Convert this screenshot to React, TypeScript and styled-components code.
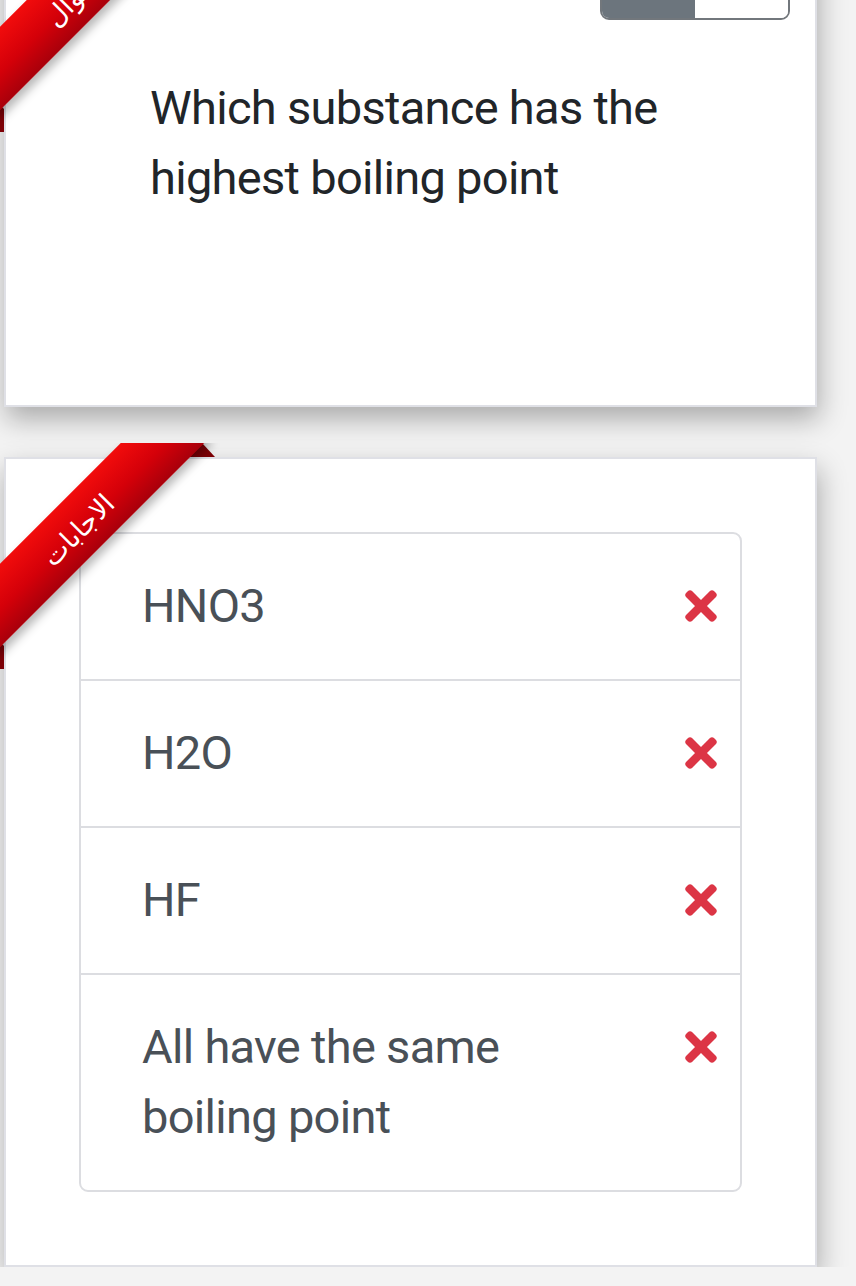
import React from 'react';
import styled, { createGlobalStyle } from 'styled-components';
import { FaTimes } from 'react-icons/fa';

const GlobalStyle = createGlobalStyle`
  html, body {
    margin: 0;
    padding: 0;
    background: #f3f3f3;
    overflow: hidden;
  }
`;

const Page = styled.div`
  padding: 0 0 0 4px;
  margin-top: -80px;
  display: flex;
  flex-direction: column;
  gap: 50px;
  font-family: Roboto, 'Liberation Sans', sans-serif;
`;

const Card = styled.div`
  position: relative;
  width: 813px;
  box-sizing: border-box;
  background: #fff;
  border: 2px solid #dfe0e6;
  box-shadow: 2px 12px 26px rgba(0, 0, 0, 0.3);
`;

const QuestionCard = styled(Card)`
  padding: 46px 25px 192px 144px;
`;

const AnswersCard = styled(Card)`
  padding: 73px;
`;

const Toolbar = styled.div`
  display: flex;
  justify-content: flex-end;
`;

const ToggleGroup = styled.div`
  display: flex;
  width: 190px;
  height: 52px;
  border: 2px solid #72777c;
  border-radius: 9px;
  overflow: hidden;
  box-sizing: border-box;
`;

const ToggleButton = styled.div<{ $active?: boolean }>`
  flex: 1;
  background: ${p => (p.$active ? '#6c757d' : '#fff')};
`;

const QuestionText = styled.p`
  margin: 53px 0 0;
  max-width: 560px;
  font-size: 47px;
  letter-spacing: -0.7px;
  line-height: 70px;
  color: #212529;
`;

const AnswerList = styled.ul`
  list-style: none;
  margin: 0;
  padding: 0;
  border: 2px solid #dcdde1;
  border-radius: 9px;
`;

const AnswerItem = styled.li`
  display: flex;
  align-items: flex-start;
  justify-content: space-between;
  gap: 24px;
  padding: 37px 16px 38px 61px;
  & + & {
    border-top: 2px solid #dcdde1;
  }
`;

const AnswerText = styled.span`
  font-size: 47px;
  letter-spacing: -0.7px;
  line-height: 70px;
  color: #495057;
  max-width: 420px;
`;

const WrongIcon = styled.span`
  display: flex;
  align-items: center;
  height: 70px;
  color: #dc3545;
`;

const RibbonWrap = styled.div`
  position: absolute;
  top: -16px;
  left: -6px;
  width: 222px;
  height: 232px;
  overflow: hidden;
  pointer-events: none;
`;

const TopFold = styled.span`
  position: absolute;
  left: 188px;
  top: 0;
  width: 27px;
  height: 14px;
  background: #7d0006;
  clip-path: polygon(52% 0, 100% 100%, 0 100%);
`;

const LeftFold = styled.span`
  position: absolute;
  left: 0;
  top: 199px;
  width: 4px;
  height: 27px;
  background: #7d0006;
  clip-path: polygon(0 0, 100% 4px, 100% 100%, 0 100%);
`;

const RibbonBand = styled.span`
  position: absolute;
  left: -69px;
  top: 52px;
  width: 300px;
  height: 59px;
  box-sizing: border-box;
  padding: 5px 12px 0 0;
  transform: rotate(-45deg);
  background: linear-gradient(to bottom, #f20c0c 0%, #d40009 55%, #a8000b 100%);
  box-shadow: 0 6px 10px rgba(0, 0, 0, 0.28);
  color: #fff;
  font-family: 'DejaVu Sans', sans-serif;
  font-size: 27px;
  line-height: 54px;
  text-align: center;
  direction: rtl;
`;

const Ribbon = ({ label }: { label: string }) => (
  <RibbonWrap>
    <TopFold />
    <LeftFold />
    <RibbonBand>{label}</RibbonBand>
  </RibbonWrap>
);

const answers = ['HNO3', 'H2O', 'HF', 'All have the same boiling point'];

export default function App() {
  return (
    <>
      <GlobalStyle />
      <Page>
        <QuestionCard>
          <Ribbon label="السؤال" />
          <Toolbar>
            <ToggleGroup>
              <ToggleButton $active />
              <ToggleButton />
            </ToggleGroup>
          </Toolbar>
          <QuestionText>Which substance has the highest boiling point</QuestionText>
        </QuestionCard>
        <AnswersCard>
          <Ribbon label="الاجابات" />
          <AnswerList>
            {answers.map(a => (
              <AnswerItem key={a}>
                <AnswerText>{a}</AnswerText>
                <WrongIcon>
                  <FaTimes size={46} />
                </WrongIcon>
              </AnswerItem>
            ))}
          </AnswerList>
        </AnswersCard>
      </Page>
    </>
  );
}
